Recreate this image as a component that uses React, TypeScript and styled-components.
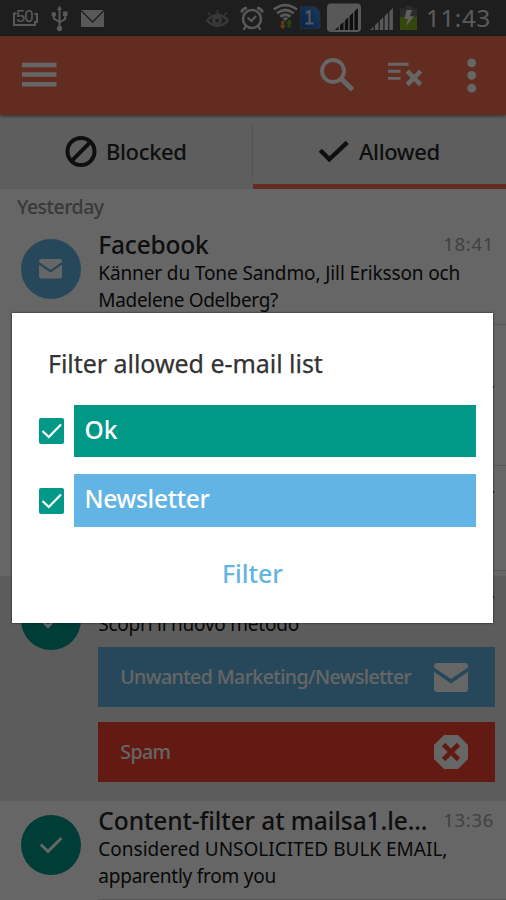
import React from "react";
import styled, { createGlobalStyle } from "styled-components";

const GlobalStyle = createGlobalStyle`
  * { box-sizing: border-box; }
  html, body { margin: 0; padding: 0; background: #666; }
  body { font-family: "Noto Sans", "Open Sans", sans-serif; }
  svg { display: block; flex: none; }
`;

const Screen = styled.div`
  position: relative;
  width: 506px;
  height: 900px;
  overflow: hidden;
  background: #fff;
`;

const StatusBar = styled.header`
  display: flex;
  align-items: flex-start;
  height: 36px;
  background: #4b4b4b;
`;

const StatusIcon = styled.svg<{ $gap: number }>`
  margin-left: ${(p) => p.$gap}px;
`;

const Clock = styled.span`
  margin-left: 8px;
  font-size: 24px;
  line-height: 35px;
  letter-spacing: 0.7px;
  color: #e2e2e2;
`;

const Toolbar = styled.nav`
  display: flex;
  align-items: flex-start;
  height: 79px;
  position: relative;
  padding-top: 22px;
  background: #f86e54;
  box-shadow: 0 1px 3px rgba(0, 0, 0, 0.55);
`;

const ToolIcon = styled.svg<{ $gap: number }>`
  margin-left: ${(p) => p.$gap}px;
`;

const Tabs = styled.div`
  display: grid;
  grid-template-columns: 253px 253px;
  height: 74px;
  background: #ebebeb;
`;

const Tab = styled.div<{ $active?: boolean }>`
  display: flex;
  align-items: flex-start;
  padding: 20px 0 0 65px;
  gap: 9px;
  font-size: 22px;
  font-weight: 500;
  letter-spacing: -0.36px;
  line-height: 32px;
  color: #262626;
  border-bottom: ${(p) => (p.$active ? "5px solid #f86e54" : "none")};
`;

const TabDivider = styled.i`
  position: absolute;
  left: 252px;
  top: 125px;
  width: 1px;
  height: 53px;
  background: #cfcfcf;
`;

const SectionHeader = styled.div`
  height: 36px;
  padding: 2px 0 0 17px;
  font-size: 19.5px;
  font-weight: 500;
  letter-spacing: -0.5px;
  line-height: 32px;
  color: #8e8e8e;
`;

const Message = styled.article<{ $height: number; $shaded?: boolean }>`
  display: flex;
  height: ${(p) => p.$height}px;
  padding-left: 20.5px;
  background: ${(p) => (p.$shaded ? "#e6e6e6" : "#fff")};
`;

const Avatar = styled.div<{ $color: string }>`
  display: flex;
  flex: none;
  align-items: center;
  justify-content: center;
  width: 60px;
  height: 60px;
  margin: 14px 17.8px 0 0;
  border-radius: 50%;
  background: ${(p) => p.$color};
`;

const Body = styled.div<{ $rule?: boolean }>`
  flex: 1;
  min-width: 0;
  border-bottom: ${(p) => (p.$rule ? "1px solid #dadada" : "none")};
`;

const TitleRow = styled.div`
  display: flex;
  justify-content: space-between;
  height: 42px;
  padding-right: 12px;
`;

const Sender = styled.h2<{ $tracking: number }>`
  margin: 0;
  font-size: 24.5px;
  font-weight: 500;
  letter-spacing: ${(p) => p.$tracking}px;
  line-height: 40px;
  color: #262626;
  white-space: nowrap;
`;

const Time = styled.span`
  font-size: 18.5px;
  line-height: 37px;
  letter-spacing: 0.7px;
  color: #a2a2a2;
`;

const TextEnd = styled.i<{ $top: number }>`
  width: 2px;
  height: 2px;
  margin: ${(p) => p.$top}px 0 0 auto;
  background: #444;
`;

const Line = styled.p<{ $tracking: number }>`
  margin: 0;
  height: 27px;
  font-size: 19px;
  line-height: 27px;
  letter-spacing: ${(p) => p.$tracking}px;
  color: #141414;
  white-space: nowrap;
  position: relative;
  top: -7px;
`;

const Reason = styled.div<{ $color: string; $gap: number }>`
  display: flex;
  align-items: center;
  justify-content: space-between;
  width: 396.5px;
  height: 60px;
  margin-top: ${(p) => p.$gap}px;
  padding: 0 27px 0 22px;
  font-size: 19.5px;
  font-weight: 500;
  letter-spacing: -0.57px;
  line-height: 58px;
  color: #fff;
  background: ${(p) => p.$color};
`;

const Backdrop = styled.div`
  position: absolute;
  inset: 0;
  background: rgba(0, 0, 0, 0.6);
`;

const Dialog = styled.section`
  position: absolute;
  left: 12px;
  top: 313px;
  width: 481px;
  height: 309.5px;
  padding: 32px 17px 0 27px;
  background: #fff;
  box-shadow: 0 0 2px rgba(0, 0, 0, 0.75);
`;

const DialogTitle = styled.h1`
  margin: 0 0 24px 9px;
  font-size: 25px;
  font-weight: 400;
  line-height: 36px;
  letter-spacing: -0.04px;
  -webkit-text-stroke: 0.25px #333;
  color: #333;
`;

const Option = styled.label`
  display: flex;
  align-items: center;
  gap: 10px;
  margin-bottom: 17.2px;
`;

const OptionLabel = styled.span<{ $color: string; $tracking: number }>`
  flex: 1;
  height: 52.25px;
  padding-left: 10.5px;
  font-size: 24.5px;
  font-weight: 500;
  line-height: 50.6px;
  letter-spacing: ${(p) => p.$tracking}px;
  color: #fff;
  background: ${(p) => p.$color};
`;

const FilterButton = styled.button`
  display: block;
  margin: 28.5px 0 0 183px;
  padding: 0;
  border: 0;
  background: none;
  font: 500 25px/36px "Noto Sans", sans-serif;
  letter-spacing: -0.1px;
  color: #62b4e4;
`;

const BLUE = "#62b4e4";
const TEAL = "#009988";
const RED = "#f54130";
const GREY = "#dcdcdc";

const Envelope = ({ width, height }: { width: number; height: number }) => (
  <svg width={width} height={height} viewBox="0 0 34 29" fill="#fff">
    <path d="M3 0H31Q34 0 34 3V4.5L17 16 0 4.5V3Q0 0 3 0Z" />
    <path d="M0 8.7 17 20.5 34 8.7V26Q34 29 31 29H3Q0 29 0 26Z" />
  </svg>
);

const AvatarCheck = () => (
  <svg width="24" height="18" viewBox="0 0 24 18" fill="none" stroke="#fff" strokeWidth="3">
    <path d="M1.8 8.5 9 15.3 22.5 2" />
  </svg>
);

const CheckBox = () => (
  <svg width="25" height="26" viewBox="0 0 25 26">
    <rect width="25" height="26" rx="2" fill={TEAL} />
    <path d="M3.5 13 9.8 19 22 6.5" fill="none" stroke="#fff" strokeWidth="2.3" />
  </svg>
);

const SignalBars = ({ x, y, color }: { x: number; y: number; color: string }) => (
  <g fill={color} transform={`translate(${x} ${y})`}>
    <path d="M0 22 3.5 18.6V22ZM5 17.2 8.5 13.8V22H5ZM9.8 12.6 13.3 9.2V22H9.8ZM14.6 8 18.1 4.6V22H14.6ZM19.4 3.4 22.9 0V22H19.4Z" />
  </g>
);

const StatusIcons = () => (
  <>
    <StatusIcon $gap={13} width="25" height="36" viewBox="0 0 25 36">
      <path d="M3.5 13.5H1V25H22V22H24V14H21.5" fill="none" stroke={GREY} strokeWidth="2" />
      <text x="3.2" y="21.8" fontSize="16" fontFamily="Liberation Sans, sans-serif" letterSpacing="-0.5" fill={GREY} stroke={GREY} strokeWidth="0.25">50</text>
    </StatusIcon>
    <StatusIcon $gap={13} width="17" height="36" viewBox="0 0 17 36" fill={GREY}>
      <path d="M8.5 5.5 11 10H6Z" />
      <circle cx="8.5" cy="28.5" r="2.7" />
      <circle cx="2.8" cy="14.5" r="2.4" />
      <path d="M12 11.5H16.5V16H12Z" />
      <path d="M8.5 8V28M2.8 14.5V18.5L8.5 22M14.2 14V19L8.5 22.5" fill="none" stroke={GREY} strokeWidth="2" />
    </StatusIcon>
    <StatusIcon $gap={13} width="24" height="36" viewBox="0 0 24 36">
      <path d="M0 10H23V27H0Z" fill={GREY} />
      <path d="M0 10.5 11.5 22 23 10.5" fill="none" stroke="#4d4d4d" strokeWidth="1.4" />
    </StatusIcon>
    <StatusIcon $gap={101} width="23" height="36" viewBox="0 0 23 36" fill="none" stroke="#8c8c8c">
      <path d="M1 20.5Q11.5 9.5 22 20.5 11.5 31.5 1 20.5Z" strokeWidth="2.4" />
      <circle cx="11" cy="20.5" r="3.4" strokeWidth="3.2" />
      <path d="M11.5 10V14M2 12.5 4.8 15.5M21 12.5 18.2 15.5" strokeWidth="1.5" />
    </StatusIcon>
    <StatusIcon $gap={11} width="24" height="36" viewBox="0 0 24 36" fill="none" stroke={GREY}>
      <circle cx="12" cy="19" r="9" strokeWidth="2.5" />
      <path d="M7.5 17.5 11.5 21 16 16M5.5 26.5 3.5 30M18.5 26.5 20.5 30" strokeWidth="2.2" />
      <path d="M1.5 12.5Q2.5 8.5 7 8M17 8Q21.5 8.5 22.5 12.5" strokeWidth="2.8" />
    </StatusIcon>
    <StatusIcon $gap={9} width="25" height="36" viewBox="0 0 25 36" fill="none" stroke={GREY} strokeWidth="2.7">
      <path d="M.8 9.5Q12 .7 24 9.5M4 13.2Q12.3 6.8 20.7 13.2M7.2 16.7Q12.3 12.8 17.5 16.7" />
      <path d="M9.5 18.5Q12.4 16.2 15.3 18.5L12.4 21Z" fill={GREY} stroke="none" />
      <path d="M8.3 20.5H11.3V25.5H13L9.8 29.5 6.5 25.5H8.3Z" fill="#e39440" stroke="none" />
      <path d="M14.5 27.5V23.5H12.8L16 19.3 19.3 23.5H17.5V27.5Z" fill="#6dab22" stroke="none" />
    </StatusIcon>
    <StatusIcon $gap={2} width="21" height="36" viewBox="0 0 21 36">
      <defs>
        <linearGradient id="sim" x1="1" y1="0" x2="0" y2="1">
          <stop offset="0" stopColor="#408fe5" />
          <stop offset="1" stopColor="#1258b8" />
        </linearGradient>
      </defs>
      <path d="M.5 6.5H15L20 12V28.5H.5Z" fill="url(#sim)" stroke="#69727d" strokeWidth="0.8" />
      <path d="M6 13 9.5 11.2V23.5M5.5 23.5H13.5" fill="none" stroke="#ddd" strokeWidth="2" />
    </StatusIcon>
    <StatusIcon $gap={6} width="35" height="36" viewBox="0 0 35 36">
      <rect y="3.5" width="34" height="28.5" rx="4" fill={GREY} />
      <SignalBars x={8} y={8} color="#262626" />
    </StatusIcon>
    <StatusIcon $gap={8} width="24" height="36" viewBox="0 0 24 36">
      <SignalBars x={0} y={8} color={GREY} />
    </StatusIcon>
    <StatusIcon $gap={6} width="18" height="36" viewBox="0 0 18 36">
      <path d="M5 6H12V8.5H17V17H0V8.5H5Z" fill="#6b6b6b" />
      <path d="M0 17H17V30H0Z" fill="#83b51d" />
      <path d="M6.5 10H12L9.8 16.2H14L6 26 8 19H4.5Z" fill="#eee" />
    </StatusIcon>
  </>
);

const ToolbarIcons = () => (
  <>
    <ToolIcon $gap={22} width="35" height="36" viewBox="0 0 35 36" fill="#fff">
      <path d="M0 4.8H34.5V9.2H0ZM0 14.2H34.5V18.8H0ZM0 24H34.5V28.5H0Z" />
    </ToolIcon>
    <ToolIcon $gap={263} width="35" height="36" viewBox="0 0 35 36" fill="none" stroke="#fff">
      <circle cx="13" cy="13" r="11" strokeWidth="3.8" />
      <path d="M21.2 20.8 32.5 31.8" strokeWidth="4.8" />
    </ToolIcon>
    <ToolIcon $gap={33} width="35" height="36" viewBox="0 0 35 36" fill="none" stroke="#fff">
      <path d="M0 6.2H20.5M0 13.2H12.5M0 20.4H12.5" strokeWidth="2.9" />
      <path d="M19.2 13.2 32.6 26.6M32.6 13.2 19.2 26.6" strokeWidth="4.5" />
    </ToolIcon>
    <ToolIcon $gap={44} width="10" height="36" viewBox="0 0 10 36" fill="#fff">
      <circle cx="4.7" cy="4.8" r="4.4" />
      <circle cx="4.7" cy="17.4" r="4.4" />
      <circle cx="4.7" cy="30.2" r="4.4" />
    </ToolIcon>
  </>
);

export default function App() {
  return (
    <>
      <GlobalStyle />
      <Screen>
        <StatusBar>
          <StatusIcons />
          <Clock>11:43</Clock>
        </StatusBar>
        <Toolbar>
          <ToolbarIcons />
        </Toolbar>
        <Tabs>
          <Tab>
            <svg width="32" height="32" viewBox="0 0 32 32" fill="none" stroke="#262626" strokeWidth="4">
              <circle cx="16" cy="16.5" r="13.5" />
              <path d="M6.7 25.8 25.3 7.2" />
            </svg>
            Blocked
          </Tab>
          <Tab $active>
            <svg width="32" height="32" viewBox="0 0 32 32" fill="none" stroke="#262626" strokeWidth="4.4">
              <path d="M2.3 15.3 11.3 24.3 29.3 7.3" />
            </svg>
            Allowed
          </Tab>
        </Tabs>
        <TabDivider />

        <SectionHeader>Yesterday</SectionHeader>
        <Message $height={100}>
          <Avatar $color={BLUE}>
            <Envelope width={23} height={19.5} />
          </Avatar>
          <Body $rule>
            <TitleRow>
              <Sender $tracking={-0.2}>Facebook</Sender>
              <Time>18:41</Time>
            </TitleRow>
            <Line $tracking={-0.12}>Känner du Tone Sandmo, Jill Eriksson och</Line>
            <Line $tracking={-0.32}>Madelene Odelberg?</Line>
          </Body>
        </Message>
        <Message $height={141}>
          <Avatar $color={TEAL} />
          <Body $rule>
            <SectionHeader />
            <TitleRow><TextEnd $top={25} /></TitleRow>
          </Body>
        </Message>
        <Message $height={105}>
          <Avatar $color={TEAL} />
          <Body $rule>
            <TitleRow><TextEnd $top={25} /></TitleRow>
          </Body>
        </Message>
        <Message $height={4.5} />
        <Message $height={225} $shaded>
          <Avatar $color={TEAL}>
            <AvatarCheck />
          </Avatar>
          <Body>
            <TitleRow><TextEnd $top={20} /></TitleRow>
            <Line $tracking={-0.24}>Scopri il nuovo metodo</Line>
            <Reason $color={BLUE} $gap={2.5}>
              Unwanted Marketing/Newsletter
              <Envelope width={34} height={29} />
            </Reason>
            <Reason $color={RED} $gap={15}>
              Spam
              <svg width="34" height="34" viewBox="0 0 34 34">
                <path d="M10 0H24L34 10V24L24 34H10L0 24V10Z" fill="#fff" />
                <path d="M9.5 9.5 24.5 24.5M24.5 9.5 9.5 24.5" stroke={RED} strokeWidth="4.6" />
              </svg>
            </Reason>
          </Body>
        </Message>
        <Message $height={99}>
          <Avatar $color={TEAL}>
            <AvatarCheck />
          </Avatar>
          <Body $rule>
            <TitleRow>
              <Sender $tracking={-0.08}>Content-filter at mailsa1.le...</Sender>
              <Time>13:36</Time>
            </TitleRow>
            <Line $tracking={0}>Considered UNSOLICITED BULK EMAIL,</Line>
            <Line $tracking={-0.23}>apparently from you</Line>
          </Body>
        </Message>

        <Backdrop />
        <Dialog>
          <DialogTitle>Filter allowed e-mail list</DialogTitle>
          <Option>
            <CheckBox />
            <OptionLabel $color={TEAL} $tracking={0}>Ok</OptionLabel>
          </Option>
          <Option>
            <CheckBox />
            <OptionLabel $color={BLUE} $tracking={-0.3}>Newsletter</OptionLabel>
          </Option>
          <FilterButton>Filter</FilterButton>
        </Dialog>
      </Screen>
    </>
  );
}
